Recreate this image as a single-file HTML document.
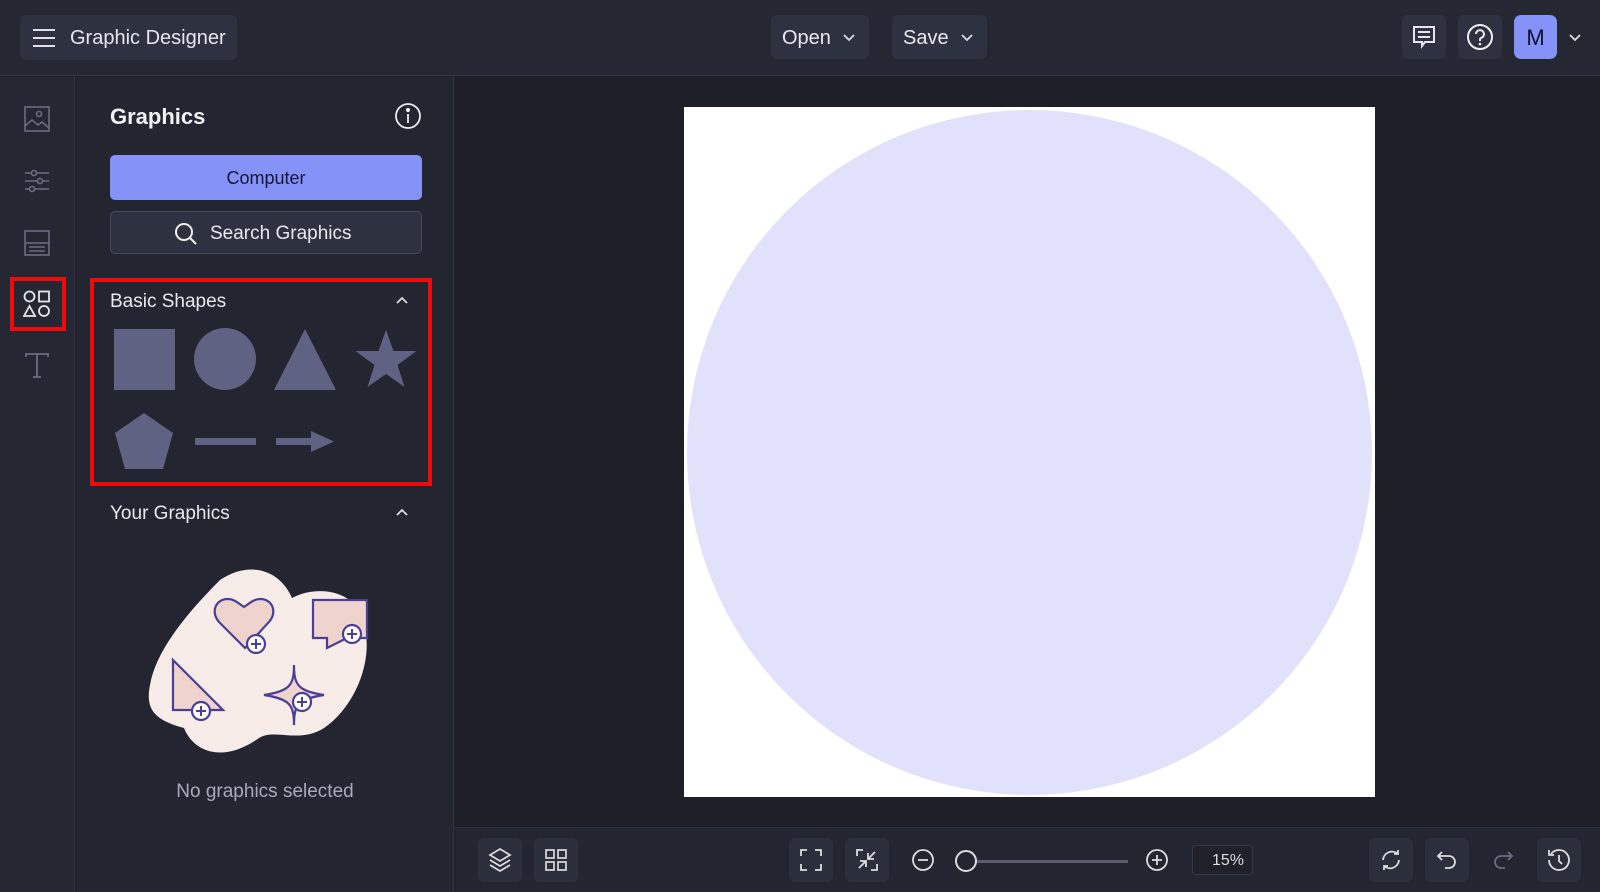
<!DOCTYPE html><html><head><style>
*{margin:0;padding:0;box-sizing:border-box}
body{width:1600px;height:892px;background:#1e1f27;font-family:"Liberation Sans",sans-serif;position:relative;overflow:hidden;color:#e8e9ef}
.a{position:absolute}
.hdr{left:0;top:0;width:1600px;height:76px;background:#252833;border-bottom:1px solid #343746}
.btn{background:#2e3140;border-radius:6px}
.rail{left:0;top:77px;width:75px;height:815px;background:#252833;border-right:1px solid #303342}
.panel{left:76px;top:77px;width:378px;height:815px;background:#232530;border-right:1px solid #303342}
.bot{left:455px;top:827px;width:1145px;height:65px;background:#232530;border-top:1px solid #2f3240}
.ib{width:44px;height:44px;border-radius:6px;background:#2b2e3b;display:flex;align-items:center;justify-content:center}
svg{display:block}
</style></head><body>
<div class="a hdr"></div>
<div class="a btn" style="left:20px;top:15px;width:217px;height:45px"></div>
<svg class="a" style="left:32px;top:27px" width="24" height="22"><g stroke="#e0e1e8" stroke-width="2"><line x1="1" y1="3" x2="23" y2="3"/><line x1="1" y1="11" x2="23" y2="11"/><line x1="1" y1="19" x2="23" y2="19"/></g></svg>
<div class="a" style="left:70px;top:27px;font-size:20px;color:#e6e7ee">Graphic Designer</div>
<div class="a btn" style="left:771px;top:15px;width:98px;height:44px"></div>
<div class="a" style="left:782px;top:27px;font-size:20px">Open</div>
<svg class="a" style="left:843px;top:34px" width="12" height="8"><path d="M1 1l5 5 5-5" stroke="#ddd" stroke-width="1.8" fill="none"/></svg>
<div class="a btn" style="left:892px;top:15px;width:95px;height:44px"></div>
<div class="a" style="left:903px;top:27px;font-size:20px">Save</div>
<svg class="a" style="left:961px;top:34px" width="12" height="8"><path d="M1 1l5 5 5-5" stroke="#ddd" stroke-width="1.8" fill="none"/></svg>
<div class="a btn" style="left:1402px;top:15px;width:44px;height:44px"></div>
<svg class="a" style="left:1412px;top:25px" width="24" height="24"><path d="M2 2h20v15h-9l-3 4v-4H2z" stroke="#e6e6ea" stroke-width="2" fill="none"/><g stroke="#e6e6ea" stroke-width="2"><line x1="6" y1="7" x2="18" y2="7"/><line x1="6" y1="12" x2="18" y2="12"/></g></svg>
<div class="a btn" style="left:1458px;top:15px;width:44px;height:44px"></div>
<svg class="a" style="left:1466px;top:23px" width="28" height="28"><circle cx="14" cy="14" r="12" stroke="#eee" stroke-width="2" fill="none"/><path d="M10 11a4 4 0 1 1 5 4c-1 .5-1 1-1 3" stroke="#eee" stroke-width="2" fill="none"/><circle cx="14" cy="21" r="1.3" fill="#eee"/></svg>
<div class="a" style="left:1514px;top:15px;width:43px;height:44px;border-radius:7px;background:#8592f8;color:#10122a;font-size:22px;text-align:center;line-height:46px">M</div>
<svg class="a" style="left:1569px;top:34px" width="12" height="8"><path d="M1 1l5 5 5-5" stroke="#ddd" stroke-width="1.8" fill="none"/></svg>

<div class="a rail"></div>
<svg class="a" style="left:24px;top:106px" width="26" height="26" fill="none" stroke="#6a6d82" stroke-width="1.6"><rect x="1" y="1" width="24" height="24"/><path d="M1 20l7-6 6 5 4-3 7 6"/><circle cx="15" cy="8" r="2.5"/></svg>
<svg class="a" style="left:24px;top:168px" width="26" height="26" fill="none" stroke="#6a6d82" stroke-width="1.6"><path d="M1 5h24M1 13h24M1 21h24"/><circle cx="10" cy="5" r="2.5" fill="#252833"/><circle cx="16" cy="13" r="2.5" fill="#252833"/><circle cx="8" cy="21" r="2.5" fill="#252833"/></svg>
<svg class="a" style="left:24px;top:230px" width="26" height="26" fill="none" stroke="#6a6d82" stroke-width="1.6"><rect x="1" y="1" width="24" height="24"/><path d="M1 13h24M5 17h16M5 21h16"/></svg>
<div class="a" style="left:10px;top:277px;width:56px;height:54px;border:4px solid #f00a0a"></div>
<svg class="a" style="left:23px;top:290px" width="28" height="28" fill="none" stroke="#e6e7ee" stroke-width="1.8"><circle cx="6.5" cy="6.5" r="5"/><rect x="16" y="1.5" width="10" height="10"/><path d="M6.5 16l5.5 10H1z"/><circle cx="21" cy="21" r="5"/></svg>
<svg class="a" style="left:24px;top:352px" width="26" height="26" fill="none" stroke="#6a6d82" stroke-width="1.8"><path d="M2 5V2h22v3M13 2v23M9 25h8"/></svg>

<div class="a panel"></div>
<div class="a" style="left:110px;top:104px;font-size:22px;font-weight:bold;color:#f1f2f6">Graphics</div>
<svg class="a" style="left:394px;top:102px" width="28" height="28" fill="none" stroke="#eee" stroke-width="1.8"><circle cx="14" cy="14" r="12"/><path d="M14 12v9"/><circle cx="14" cy="8" r="1.2" fill="#eee"/></svg>
<div class="a" style="left:110px;top:155px;width:312px;height:45px;background:#8592f8;border-radius:5px;color:#141633;font-size:18px;text-align:center;line-height:47px">Computer</div>
<div class="a" style="left:110px;top:211px;width:312px;height:43px;background:#2e3140;border:1px solid #474a5b;border-radius:5px;font-size:19px;line-height:43px;padding-left:99px">Search Graphics</div>
<svg class="a" style="left:174px;top:222px" width="24" height="24" fill="none" stroke="#eee" stroke-width="2"><circle cx="10" cy="10" r="8"/><path d="M16 16l6 6"/></svg>
<div class="a" style="left:90px;top:278px;width:342px;height:208px;border:4px solid #f00a0a"></div>
<div class="a" style="left:110px;top:291px;font-size:19px">Basic Shapes</div>
<svg class="a" style="left:396px;top:296px" width="12" height="8"><path d="M1 7l5-5 5 5" stroke="#ddd" stroke-width="1.8" fill="none"/></svg>
<svg class="a" style="left:110px;top:326px" width="320" height="150" fill="#5f6282">
<rect x="4" y="3" width="61" height="61"/><circle cx="115" cy="33" r="31"/><path d="M195 3l31 61h-62z"/>
<path d="M276 4l7.5 21h23l-19 14 7 22-18.5-13-18.5 13 7-22-19-14h23z"/>
<path d="M34 87l29 20-10 36H15L5 107z"/><rect x="85" y="112" width="61" height="7"/>
<rect x="166" y="112" width="36" height="7"/><path d="M201 105l23 10.5-23 10.5z"/></svg>
<div class="a" style="left:110px;top:503px;font-size:19px">Your Graphics</div>
<svg class="a" style="left:396px;top:508px" width="12" height="8"><path d="M1 7l5-5 5 5" stroke="#ddd" stroke-width="1.8" fill="none"/></svg>
<svg class="a" style="left:140px;top:560px" width="250" height="200">
<path d="M80 20c30-20 60-10 72 18 22-12 60-10 70 20 15 40-8 90-38 110-25 16-50 0-65 10-35 25-65 15-75-10C15 160 5 150 10 125 15 95 40 60 80 20z" fill="#f8ece9"/>
<g stroke="#4a3f96" stroke-width="2.2" fill="#eed4cc">
<path d="M105 88L80 63c-10-10-5-24 8-24 6 0 10 4 16 8 6-4 10-8 16-8 13 0 18 14 8 24z"/>
<path d="M173 40h54v38h-20l-20 10V78h-14z"/>
<path d="M33 100l50 50H33z"/>
<path d="M154 105c0 20 4 26 30 30-26 4-30 10-30 30 0-20-4-26-30-30 26-4 30-10 30-30z"/>
<g fill="#fff"><circle cx="116" cy="84" r="9"/><circle cx="212" cy="74" r="9"/><circle cx="61" cy="151" r="9"/><circle cx="162" cy="142" r="9"/></g>
<g stroke-width="2"><path d="M116 79v10M111 84h10M212 69v10M207 74h10M61 146v10M56 151h10M162 137v10M157 142h10"/></g></g></svg>
<div class="a" style="left:76px;top:781px;width:378px;text-align:center;font-size:19px;color:#a9abbb">No graphics selected</div>

<div class="a" style="left:684px;top:107px;width:691px;height:690px;background:#fff"></div>
<div class="a" style="left:687px;top:110px;width:685px;height:685px;border-radius:50%;background:#e2e1fc"></div>

<div class="a bot"></div>
<div class="a ib" style="left:478px;top:838px"><svg width="26" height="26" fill="none" stroke="#ddd" stroke-width="1.7"><path d="M13 2l10 6-10 6-10-6z"/><path d="M3 13l10 6 10-6M3 18l10 6 10-6"/></svg></div>
<div class="a ib" style="left:534px;top:838px"><svg width="24" height="24" fill="none" stroke="#ddd" stroke-width="1.7"><rect x="2" y="2" width="8" height="8"/><rect x="14" y="2" width="8" height="8"/><rect x="2" y="14" width="8" height="8"/><rect x="14" y="14" width="8" height="8"/></svg></div>
<div class="a ib" style="left:789px;top:838px"><svg width="24" height="24" fill="none" stroke="#ddd" stroke-width="1.8"><path d="M2 8V2h6M16 2h6v6M22 16v6h-6M8 22H2v-6"/></svg></div>
<div class="a ib" style="left:845px;top:838px"><svg width="24" height="24" fill="none" stroke="#ddd" stroke-width="1.8"><path d="M2 8V2h6M22 16v6h-6M20 4l-7 7M13 5v6h6M4 20l7-7M5 13h6v6"/></svg></div>
<svg class="a" style="left:911px;top:848px" width="24" height="24" fill="none" stroke="#ddd" stroke-width="1.8"><circle cx="12" cy="12" r="10"/><path d="M7 12h10"/></svg>
<div class="a" style="left:965px;top:860px;width:163px;height:3px;background:#5a5d6e"></div>
<div class="a" style="left:955px;top:850px;width:22px;height:22px;border-radius:50%;border:2px solid #ddd;background:#232530"></div>
<svg class="a" style="left:1145px;top:848px" width="24" height="24" fill="none" stroke="#ddd" stroke-width="1.8"><circle cx="12" cy="12" r="10"/><path d="M7 12h10M12 7v10"/></svg>
<div class="a" style="left:1192px;top:845px;width:61px;height:30px;border:1px solid #363948;border-radius:4px;background:#1f2029;font-size:16px;text-align:right;padding-right:8px;line-height:30px;color:#ddd">15%</div>
<div class="a ib" style="left:1369px;top:838px"><svg width="24" height="24" fill="none" stroke="#ddd" stroke-width="1.8"><path d="M19 6a9 9 0 0 0-15 6M5 18a9 9 0 0 0 15-6M19 2v4h-4M5 22v-4h4"/></svg></div>
<div class="a ib" style="left:1425px;top:838px"><svg width="24" height="24" fill="none" stroke="#ddd" stroke-width="1.8"><path d="M7 4L3 8l4 4M3 8h11a6 6 0 0 1 0 12H10"/></svg></div>
<div class="a" style="left:1481px;top:838px;width:44px;height:44px;display:flex;align-items:center;justify-content:center"><svg width="24" height="24" fill="none" stroke="#6a6d80" stroke-width="1.8"><path d="M17 4l4 4-4 4M21 8H10a6 6 0 0 0 0 12h4"/></svg></div>
<div class="a ib" style="left:1537px;top:838px"><svg width="26" height="26" fill="none" stroke="#ddd" stroke-width="1.8"><path d="M5 7a10 10 0 1 1-2 6M3 3v5h5M13 8v6l3 3"/></svg></div>
</body></html>
